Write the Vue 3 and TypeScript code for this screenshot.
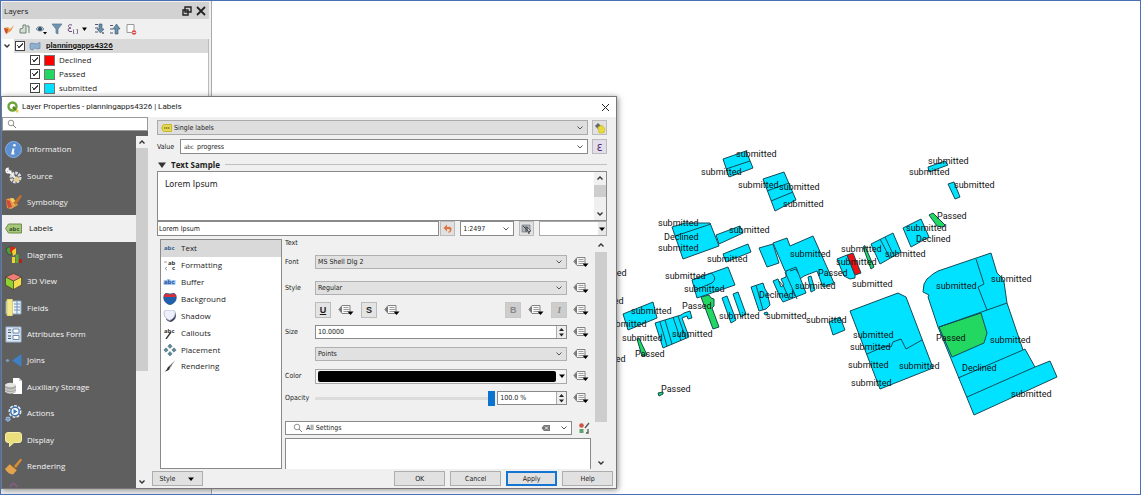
<script setup lang="ts">
import { ref } from 'vue'

type Status = 'Declined' | 'Passed' | 'submitted'
interface Parcel { points: string; kind: Status }
interface MapLabel { x: number; y: number; text: Status }

const legend = ref<{ name: Status; on: boolean }[]>([
  { name: 'Declined', on: true },
  { name: 'Passed', on: true },
  { name: 'submitted', on: true },
])
const layerOn = ref(true)

const pages = [
  { name: 'Information', icon: 'info' },
  { name: 'Source', icon: 'source' },
  { name: 'Symbology', icon: 'symbology' },
  { name: 'Labels', icon: 'labels' },
  { name: 'Diagrams', icon: 'diagrams' },
  { name: '3D View', icon: 'cube' },
  { name: 'Fields', icon: 'fields' },
  { name: 'Attributes Form', icon: 'form' },
  { name: 'Joins', icon: 'joins' },
  { name: 'Auxiliary Storage', icon: 'storage' },
  { name: 'Actions', icon: 'actions' },
  { name: 'Display', icon: 'display' },
  { name: 'Rendering', icon: 'rendering' },
]
const page = ref('Labels')

const sections = [
  { name: 'Text', icon: 'abc' },
  { name: 'Formatting', icon: 'formatting' },
  { name: 'Buffer', icon: 'buffer' },
  { name: 'Background', icon: 'shield' },
  { name: 'Shadow', icon: 'shadow' },
  { name: 'Callouts', icon: 'callouts' },
  { name: 'Placement', icon: 'placement' },
  { name: 'Rendering', icon: 'brush' },
]
const section = ref('Text')

const sample = ref('Lorem Ipsum')
const size = ref('10.0000')
const opacity = ref(100)

const parcels: Parcel[] = [
  { kind: 'submitted', points: '723,159 746,151 753,168 729,177' },
  { kind: 'submitted', points: '763,179 784,172 796,200 775,211' },
  { kind: 'submitted', points: '716,235 740,226 743,233 719,244' },
  { kind: 'submitted', points: '672,227 685,223 710,223 719,246 683,259' },
  { kind: 'submitted', points: '723,254 748,244 751,252 726,262' },
  { kind: 'submitted', points: '692,280 728,267 735,285 697,298' },
  { kind: 'Passed', points: '701,297 709,295 711,298 714,299 714,306 712,308 719,327 713,329' },
  { kind: 'submitted', points: '722,298 727,296 736,320 731,323' },
  { kind: 'submitted', points: '733,294 738,292 746,314 741,317' },
  { kind: 'submitted', points: '751,287 763,283 765,289 767,292 770,305 766,309 759,311' },
  { kind: 'submitted', points: '623,314 653,302 657,318 628,330' },
  { kind: 'submitted', points: '655,323 681,315 684,313 690,311 692,318 688,319 687,316 682,318 689,337 663,348' },
  { kind: 'Passed', points: '637,339 639,338 647,355 642,356' },
  { kind: 'Passed', points: '658,393 663,392 663,394 659,396' },
  { kind: 'submitted', points: '764,313 767,312 768,314 765,315' },
  { kind: 'submitted', points: '759,248 773,244 779,263 767,267' },
  { kind: 'submitted', points: '773,243 787,238 790,246 813,236 834,283 823,287 817,271 804,276 800,279 785,271' },
  { kind: 'submitted', points: '808,277 811,276 815,290 811,292' },
  { kind: 'submitted', points: '773,281 778,279 781,287 784,285 781,279 786,277 786,271 796,267 806,293 783,302 780,297' },
  { kind: 'submitted', points: '837,259 847,255 855,275 855,278 850,279 844,276' },
  { kind: 'Declined', points: '847,255 853,253 861,273 855,275' },
  { kind: 'Passed', points: '863,247 865,246 874,267 871,269' },
  { kind: 'submitted', points: '871,244 893,233 901,252 880,264' },
  { kind: 'submitted', points: '903,228 921,219 929,237 911,247' },
  { kind: 'Passed', points: '929,215 933,213 945,225 943,227 937,226' },
  { kind: 'submitted', points: '928,167 945,161 948,165 929,172' },
  { kind: 'submitted', points: '948,184 954,182 960,197 955,199' },
  { kind: 'submitted', points: '850,311 898,293 906,297 933,368 880,389' },
  { kind: 'submitted', points: '829,322 840,317 845,330 833,335' },
  { kind: 'submitted', points: '923,292 924,284 927,279 933,274 938,271 991,253 997,273 1002,278 1004,282 1007,303 1023,350 1025,349 1035,367 1050,361 1057,377 974,415 938,327 928,297 929,295' },
  { kind: 'Passed', points: '939,327 981,313 987,333 984,343 952,357' },
]

const boundaries = [
  'M726,169 750,161', 'M767,191 789,183', 'M771,201 793,192', 'M675,236 711,224',
  'M692,280 711,273Q718,278 712,283L695,290', 'M756,285 763,310', 'M660,322 667,346',
  'M665,320 672,344', 'M673,317 681,341', 'M678,316 686,339', 'M785,272 797,299',
  'M779,281 784,287 789,299', 'M790,271 796,269 798,273', 'M792,289 795,296',
  'M880,239 890,258', 'M885,237 893,254', 'M867,354 885,346 891,347 893,342 901,339 906,349 922,340',
  'M976,259 984,284 978,287 987,310', 'M939,327 1007,303', 'M958,378 1023,350', 'M967,397 1035,367',
]

const at = (text: Status, spots: number[][]): MapLabel[] => spots.map(([x, y]) => ({ x, y, text }))
const mapLabels: MapLabel[] = [
  ...at('submitted', [
    [736, 157], [701, 175], [738, 188], [779, 190], [783, 207], [729, 233], [707, 262], [658, 226],
    [658, 251], [665, 279], [684, 292], [719, 319], [766, 319], [795, 289], [790, 257], [841, 252],
    [836, 265], [852, 287], [885, 257], [906, 231], [928, 164], [909, 175], [954, 188], [806, 323],
    [853, 338], [850, 350], [848, 368], [899, 369], [851, 386], [936, 289], [991, 282], [990, 343],
    [1011, 397], [631, 314], [606, 327], [622, 341], [672, 337], [586, 276], [583, 304], [585, 362],
  ]),
  ...at('Declined', [[664, 240], [759, 298], [916, 242], [962, 371]]),
  ...at('Passed', [[682, 309], [818, 276], [937, 219], [936, 341], [635, 357], [661, 392]]),
]
</script>

<template>
  <div class="desktop">
    <svg class="defs" aria-hidden="true">
      <symbol id="chev" viewBox="0 0 8 8"><path d="M1.5 2.5 4 5l2.5-2.5" fill="none" stroke="#555" /></symbol>
      <symbol id="up" viewBox="0 0 8 8"><path d="M1.5 5.5 4 3l2.5 2.5" fill="none" stroke="#333" stroke-width="1.4" /></symbol>
      <symbol id="down" viewBox="0 0 8 8"><path d="M1.5 2.5 4 5l2.5-2.5" fill="none" stroke="#333" stroke-width="1.4" /></symbol>
      <symbol id="tri" viewBox="0 0 8 8"><path d="M1 2.500h6L4 6z" fill="#000" /></symbol>
      <symbol id="spin" viewBox="0 0 8 12"><path d="M1.500 5 4 2l2.500 3zM1.500 7.500 4 10.500 6.500 7.500z" fill="#222" /></symbol>
      <symbol id="lens" viewBox="0 0 10 10"><circle cx="4" cy="4" r="2.800" fill="none" stroke="#777" stroke-width=".8" /><path d="m6 6 3 3" stroke="#777" /></symbol>
      <symbol id="define" viewBox="0 0 16 12">
        <path d="M4 1.500h8v8H4L.8 5.500z" fill="#f7f7f7" stroke="#777" stroke-width=".9" />
        <path d="M4 2v7L1 5.500z" fill="#777" />
        <path d="M5.500 3.500h5M5.500 5.500h6M5.500 7.500h5" stroke="#888" stroke-width=".8" />
        <path d="M9.500 7.500h6l-3 3.500z" fill="#000" />
      </symbol>
      <symbol id="info" viewBox="0 0 17 17"><circle cx="8.500" cy="8.500" r="8" fill="#5b8fd0" stroke="#86aee0" /><path d="M8.600 7.500 7.400 12.500h2" fill="none" stroke="#fff" stroke-width="2" /><circle cx="9.400" cy="4.300" r="1.300" fill="#fff" /></symbol>
      <symbol id="source" viewBox="0 0 17 17">
        <circle cx="10.500" cy="10.500" r="4.500" fill="none" stroke="#d8dde4" stroke-width="3" stroke-dasharray="2.400 1" />
        <path d="m2 2 11 12" stroke="#eee" stroke-width="2.200" /><circle cx="3.500" cy="3.500" r="2.300" fill="none" stroke="#fff" stroke-width="1.600" stroke-dasharray="10 4" />
        <path d="m8 13 4-4 3 4-3 2z" fill="#e5cf8a" />
      </symbol>
      <symbol id="symbology" viewBox="0 0 17 17"><path d="M1 5 8 4l5 7-7 4-4-1z" fill="#e2a04a" /><path d="m1 5 4 2 2 6-4 1z" fill="#d64a3b" /><path d="M5 4.500 8 4l4 5-3 2z" fill="#f0cf62" /><path d="m8 9 7-8 2 1-6 9z" fill="#c3702f" /></symbol>
      <symbol id="labels" viewBox="0 0 17 10"><path d="M3.500.5h13v9h-13L.5 5z" fill="#a7c77a" stroke="#6d9146" /><text x="4" y="7" font-size="6" font-weight="bold" fill="#33512a">abc</text></symbol>
      <symbol id="diagrams" viewBox="0 0 17 17"><path d="M1 3Q5-1 10 2L6 9Q2 9 1 3z" fill="#49a23c" stroke="#222" stroke-width=".5" /><path d="M5 1q4-1 6 1L8 8 5 6z" fill="#d52b1e" /><path d="M7 5 11 2v6l-3 2z" fill="#f2d22e" /><path d="M7 11h3v6H7z" fill="#f2d22e" /><path d="M10.500 8.500h3V17h-3z" fill="#57ad3b" /><path d="M14 13h3v4h-3z" fill="#b81f1f" /></symbol>
      <symbol id="cube" viewBox="0 0 17 17"><path d="M8.500.5 16.500 4 8.500 8 .5 4z" fill="#ee7b78" /><path d="M.5 4 8.500 8v8.500L.5 12z" fill="#8fd133" /><path d="M16.500 4 8.500 8v8.500l8-4.500z" fill="#f2dd51" /><path d="M.5 4 8.500 8l8-4M8.500 8v8.500M.5 4v8l8 4.500 8-4.500V4l-8-3.500z" fill="none" stroke="#453b24" stroke-width=".7" /></symbol>
      <symbol id="fields" viewBox="0 0 17 17"><path d="M1 2h15v13H1z" fill="#eef2f6" stroke="#86a5c4" /><path d="M9 5h6M9 8h6M9 11h6M12 2v13" stroke="#6f95bf" /><path d="M2 0h5.500v17H2z" fill="#f3e98b" stroke="#c9b94f" stroke-width=".6" /></symbol>
      <symbol id="form" viewBox="0 0 17 17"><path d="M1 1h15v15H1z" fill="#dbe6f2" stroke="#9db6d0" /><path d="M8 3h6v4H8zM8 9.500h6v4H8z" fill="#fff" stroke="#6f8bab" /><path d="M3 4h3M3 6.500h3M3 10h3M3 12.500h3" stroke="#44597a" /></symbol>
      <symbol id="joins" viewBox="0 0 17 17"><path d="M16.500 2v13L7 8.500z" fill="#3f7fc4" /><circle cx="2.500" cy="8.500" r="1.600" fill="#7f9cb8" /></symbol>
      <symbol id="storage" viewBox="0 0 17 17"><path d="M8 0h6l3 3v13H8z" fill="#fff" /><path d="M14 0v3h3" fill="#ccc" /><path d="M0 7v7q5 4 11 0V7z" fill="#a8a8a4" /><ellipse cx="5.500" cy="7" rx="5.500" ry="2.200" fill="#e4e4e0" /><path d="M0 10.500q5 3.500 11 0M0 13q5 3.500 11 0" fill="none" stroke="#eee" stroke-width=".7" /></symbol>
      <symbol id="actions" viewBox="0 0 17 17"><circle cx="10" cy="6.500" r="5" fill="#fff" stroke="#dfe8f2" stroke-width="3" stroke-dasharray="2.500 1.200" /><circle cx="10" cy="6.500" r="4.200" fill="#fff" stroke="#3c72ad" stroke-width="1.500" /><path d="m8.500 4 4 2.500-4 2.500z" fill="#3c72ad" /><circle cx="3" cy="14" r="2" fill="#6f9acb" stroke="#a9c4e2" stroke-width="1.300" stroke-dasharray="1.500 .7" /></symbol>
      <symbol id="display" viewBox="0 0 17 17"><path d="M3 1.500h11q2.500 0 2.500 2.500v5q0 2.500-2.500 2.500H9L4.500 15.500V11.500H3Q.5 11.500.5 9V4Q.5 1.500 3 1.500z" fill="#eadf7c" stroke="#f4edaa" /></symbol>
      <symbol id="rendering" viewBox="0 0 17 17"><path d="m9 8 6.500-7.500L17 2l-6 8z" fill="#d88d33" /><path d="m5 6 7 6-4 4.500Q3 16 0 11z" fill="#e3a34e" /><path d="m5 6 7 6" stroke="#8b5a20" /></symbol>
      <symbol id="abc" viewBox="0 0 14 12"><text x="1" y="8" font-size="6" font-weight="bold" fill="#2f608c">abc</text></symbol>
      <symbol id="formatting" viewBox="0 0 14 12"><text x="5" y="6" font-size="6" font-weight="bold" fill="#333">ab</text><text x="9" y="11" font-size="6" font-weight="bold" fill="#333">c</text><path d="M1 3h3M4 8 2 9.500 4 11" fill="none" stroke="#888" stroke-width=".8" /></symbol>
      <symbol id="buffer" viewBox="0 0 14 12"><text x="1" y="8" font-size="6" font-weight="bold" fill="#24539c" stroke="#9cc0ee" stroke-width="2" paint-order="stroke">abc</text></symbol>
      <symbol id="shield" viewBox="0 0 14 12"><path d="M1 2 3 0l4 1 4-1 2 2q2 7-6 10Q-1 9 1 2z" fill="#1f61ad" stroke="#274a78" stroke-width=".5" /><path d="M1 2.500 3 .5l4 1 4-1 2 2V4H1z" fill="#d8303a" /></symbol>
      <symbol id="shadow" viewBox="0 0 14 12"><path d="M3 2 12 2q3 7-4 10-5-1-5-4z" fill="#3a3f55" /><path d="M1 1.500 3 0h7l2 1.500Q13 8 6.500 10.500.5 8 1 1.500z" fill="#eef0fb" stroke="#a6acc8" stroke-width=".7" /></symbol>
      <symbol id="callouts" viewBox="0 0 14 12"><text x="1" y="6" font-size="6" font-weight="bold" fill="#333">abc</text><path d="m8 5-5 7" stroke="#333" stroke-width="1.300" /></symbol>
      <symbol id="placement" viewBox="0 0 14 12"><path d="m7 0 2.200 2.200L7 4.400 4.800 2.200zM7 7.600l2.200 2.200L7 12 4.800 9.800zM3 3.800 5.200 6 3 8.200.8 6zM11 3.800 13.200 6 11 8.200 8.800 6z" fill="#5f8a96" stroke="#3d6470" stroke-width=".5" /></symbol>
      <symbol id="brush" viewBox="0 0 14 12"><path d="M12.500 0Q9 4 8 7L6 8 5.500 6.500Z" fill="#777" /><path d="M7 6.500Q7 11 1.500 11.500 4 10 5 7z" fill="#333" /></symbol>
    </svg>

    <aside class="layers">
      <header class="layers-title">
        <span>Layers</span>
        <button class="flat" aria-label="Float panel">
          <svg width="10" height="10" viewBox="0 0 10 10"><path d="M3 1h6v5H3zM1 4h5v5H1z" fill="#d0d0d0" stroke="#222" stroke-width="1.400" /></svg>
        </button>
        <button class="flat" aria-label="Close panel">
          <svg width="10" height="10" viewBox="0 0 10 10"><path d="m1 1 8 8m0-8L1 9" stroke="#222" stroke-width="1.800" /></svg>
        </button>
      </header>
      <div class="tools">
        <button class="flat" aria-label="Style panel"><svg width="12" height="12" viewBox="0 0 12 12"><path d="m1 5 4-1 2 2 4-4-3 6-5 3z" fill="#e6a04a" /><path d="m1 5 4 1-1 5-2-2z" fill="#cf4a32" /></svg></button>
        <button class="flat" aria-label="Add group"><svg width="12" height="12" viewBox="0 0 12 12"><path d="M1 10V6l3-1V2h3v8zM8 3h2v7" fill="#d5dcd4" stroke="#6f8577" /></svg></button>
        <button class="flat" aria-label="Map themes"><svg width="12" height="12" viewBox="0 0 12 12"><path d="M1 6q4-5 8 0-4 4-8 0z" fill="#bccbd8" stroke="#7d8f9e" /><circle cx="5" cy="6" r="2" fill="#31536f" /><path d="M8 9h4l-2 2.500z" /></svg></button>
        <button class="flat" aria-label="Filter legend"><svg width="12" height="12" viewBox="0 0 12 12"><path d="M1 1h10L7 6v5l-2-1V6z" fill="#6f94b3" stroke="#58788f" stroke-width=".7" /></svg></button>
        <button class="flat wide" aria-label="Filter by expression"><svg width="22" height="12" viewBox="0 0 22 12"><path d="M5 2Q1 1 1.500 3.500 2 5 4 5 1 5 1 7t4 1.500" fill="none" stroke="#6b4a7a" /><path d="M6.500 6.500v4h1m2-4h1v4h-1" fill="none" stroke="#6b4a7a" stroke-width=".8" /><path d="M15 4.500h5L17.500 8z" /></svg></button>
        <button class="flat" aria-label="Expand all"><svg width="12" height="12" viewBox="0 0 12 12"><path d="M2 1.500h3M2 5h3M2 9h3" stroke="#557" /><path d="M6 1h3v5h2l-3.500 4L4 6h2z" fill="#6b91a8" stroke="#38586b" stroke-width=".6" /><path d="M9 9h2v2H9z" fill="#888" /></svg></button>
        <button class="flat" aria-label="Collapse all"><svg width="12" height="12" viewBox="0 0 12 12"><path d="M1 2.500h3M1 6h3M1 10h3" stroke="#557" /><path d="M6 11h3V6h2L7.500 1 4 6h2z" fill="#6b91a8" stroke="#38586b" stroke-width=".6" /></svg></button>
        <button class="flat" aria-label="Remove layer"><svg width="12" height="12" viewBox="0 0 12 12"><path d="M2 1.500h7v8H2z" fill="#fafafa" stroke="#999" /><circle cx="9" cy="9.500" r="2.300" fill="#dd4c4c" /><path d="M7.500 9.500h3" stroke="#fff" stroke-width=".8" /></svg></button>
      </div>
      <div class="tree">
        <div class="layer">
          <svg width="8" height="8"><use href="#down" /></svg>
          <input id="layer" v-model="layerOn" type="checkbox" />
          <svg width="12" height="9" viewBox="0 0 12 9"><path d="M1 1.500q2-1 4 0t6-1v6q-3 1-5-.5-2 0-2 2-3 0-3-2z" fill="#8fb0cf" stroke="#6587a8" stroke-width=".7" /></svg>
          <label for="layer">planningapps4326</label>
        </div>
        <div v-for="item in legend" :key="item.name" class="class-row">
          <input :id="item.name" v-model="item.on" type="checkbox" />
          <span class="swatch" :class="item.name.toLowerCase()"></span>
          <label :for="item.name">{{ item.name }}</label>
        </div>
      </div>
    </aside>

    <main class="map">
      <svg viewBox="212 1 928 493" preserveAspectRatio="xMinYMin meet" role="img" aria-label="Planning applications map">
        <polygon v-for="(p, i) in parcels" :key="i" :points="p.points" :class="['parcel', p.kind.toLowerCase()]" />
        <path v-for="(d, i) in boundaries" :key="'b' + i" :d="d" class="boundary" />
        <text v-for="(l, i) in mapLabels" :key="'t' + i" :x="l.x" :y="l.y">{{ l.text }}</text>
      </svg>
    </main>

    <section class="dialog" role="dialog" aria-label="Layer Properties">
      <header class="dialog-title">
        <svg width="12" height="12" viewBox="0 0 12 12"><circle cx="5.500" cy="5.500" r="4" fill="none" stroke="#6ca33b" stroke-width="2.400" /><path d="m6 6 5 5" stroke="#e9d24a" stroke-width="2.500" /><path d="m6 6 3 3" stroke="#4d8a2c" stroke-width="2.500" /></svg>
        <h1>Layer Properties - planningapps4326 | Labels</h1>
        <button class="flat" aria-label="Close"><svg width="9" height="9" viewBox="0 0 9 9"><path d="m1 1 7 7m0-7L1 8" stroke="#222" /></svg></button>
      </header>

      <div class="dialog-body">
        <nav class="side">
          <div class="search">
            <svg width="10" height="10"><use href="#lens" /></svg>
            <input type="text" aria-label="Search options" />
          </div>
          <div class="side-main">
            <div class="pages">
              <button v-for="p in pages" :key="p.name" :class="['page', { active: p.name === page }]" @click="page = p.name">
                <svg width="17" height="17"><use :href="'#' + p.icon" /></svg><span>{{ p.name }}</span>
              </button>
              <button class="page more" aria-label="Variables"><svg width="17" height="8" viewBox="0 0 17 8"><path d="M5 7q3-7 7 0" fill="none" stroke="#8a5c8a" stroke-width="1.500" /></svg></button>
            </div>
            <div class="bar">
              <svg width="8" height="8"><use href="#up" /></svg>
              <span class="thumb"></span>
              <svg width="8" height="8"><use href="#down" /></svg>
            </div>
          </div>
        </nav>

        <div class="content">
          <div class="line">
            <div class="combo grey">
              <svg class="lead" width="11" height="8" viewBox="0 0 11 8"><path d="M2.500.5h8v7h-8L.5 4z" fill="#e6d94c" stroke="#c4b63a" /><path d="M3 4h6" stroke="#84782a" stroke-width="1.500" stroke-dasharray="1.500 .5" /></svg>
              <select aria-label="Label mode" class="pad-icon"><option>Single labels</option></select>
              <svg class="arrow" width="8" height="8"><use href="#chev" /></svg>
            </div>
            <button class="tool" aria-label="Placement engine settings"><svg width="12" height="12" viewBox="0 0 12 12"><path d="m1 4 3-3 3 3-3 3z" fill="#666" /><path d="m4 5 4-2 3 4-1 4H5z" fill="#e8d93b" stroke="#c7b52f" stroke-width=".6" /></svg></button>
          </div>
          <div class="line">
            <label class="value" for="value">Value</label>
            <div class="combo">
              <svg class="lead" width="12" height="8" viewBox="0 0 12 8"><text x="0" y="6" font-size="6" fill="#333">abc</text></svg>
              <select id="value" class="pad-icon"><option>progress</option></select>
              <svg class="arrow" width="8" height="8"><use href="#chev" /></svg>
            </div>
            <button class="tool violet" aria-label="Expression">ε</button>
          </div>
          <h2><svg width="8" height="8" viewBox="0 0 8 8"><path d="M0 1.500h8L4 7z" fill="#333" /></svg><span>Text Sample</span></h2>
          <div class="preview">
            <p>{{ sample }}</p>
            <div class="bar">
              <svg width="8" height="8"><use href="#up" /></svg>
              <span class="thumb"></span>
              <svg width="8" height="8"><use href="#down" /></svg>
            </div>
          </div>
          <div class="sample-row">
            <input v-model="sample" type="text" class="sample" aria-label="Sample text" />
            <button class="tool" aria-label="Reset sample"><svg width="10" height="10" viewBox="0 0 10 10"><path d="M4 .5v7L.5 4zM4 3q5-1 4.500 3Q8 8.500 5.500 9V7.500Q7 7 7 6T4 5z" fill="#de7440" /></svg></button>
            <div class="combo scale">
              <select aria-label="Scale"><option>1:2497</option></select>
              <svg class="arrow" width="8" height="8"><use href="#chev" /></svg>
            </div>
            <button class="tool" aria-label="Use map scale"><svg width="11" height="10" viewBox="0 0 11 10"><path d="M1 1h8v7H1z" fill="#aab4bb" stroke="#778" stroke-width=".7" /><path d="m2 2 5 5M5 2v6" stroke="#444" /><path d="m6 3 4 4H8v3z" fill="#fff" stroke="#333" stroke-width=".7" /></svg></button>
            <button class="preview-color" aria-label="Preview background"><span></span><svg width="8" height="8"><use href="#tri" /></svg></button>
          </div>

          <div class="panel">
            <div class="sections">
              <button v-for="s in sections" :key="s.name" :class="{ active: s.name === section }" @click="section = s.name">
                <svg width="14" height="12"><use :href="'#' + s.icon" /></svg><span>{{ s.name }}</span>
              </button>
            </div>
            <div class="settings">
              <p class="heading">Text</p>
              <div class="row first">
                <label for="font">Font</label>
                <div class="combo light"><select id="font"><option>MS Shell Dlg 2</option></select><svg class="arrow" width="8" height="8"><use href="#chev" /></svg></div>
                <button class="flat" aria-label="Override font"><svg width="16" height="12"><use href="#define" /></svg></button>
              </div>
              <div class="row">
                <label for="style">Style</label>
                <div class="combo light"><select id="style"><option>Regular</option></select><svg class="arrow" width="8" height="8"><use href="#chev" /></svg></div>
                <button class="flat" aria-label="Override style"><svg width="16" height="12"><use href="#define" /></svg></button>
              </div>
              <div class="row">
                <span></span>
                <div class="marks">
                  <button class="mark under">U</button>
                  <button class="flat" aria-label="Override underline"><svg width="16" height="12"><use href="#define" /></svg></button>
                  <button class="mark">S</button>
                  <button class="flat" aria-label="Override strikeout"><svg width="16" height="12"><use href="#define" /></svg></button>
                  <button class="mark off push" disabled>B</button>
                  <button class="flat" aria-label="Override bold"><svg width="16" height="12"><use href="#define" /></svg></button>
                  <button class="mark off italic" disabled>I</button>
                </div>
                <button class="flat" aria-label="Override italic"><svg width="16" height="12"><use href="#define" /></svg></button>
              </div>
              <div class="row">
                <label for="size">Size</label>
                <div class="spin"><input id="size" v-model="size" type="text" /><svg width="8" height="12"><use href="#spin" /></svg></div>
                <button class="flat" aria-label="Override size"><svg width="16" height="12"><use href="#define" /></svg></button>
              </div>
              <div class="row">
                <span></span>
                <div class="combo light"><select aria-label="Size unit"><option>Points</option></select><svg class="arrow" width="8" height="8"><use href="#chev" /></svg></div>
                <button class="flat" aria-label="Override unit"><svg width="16" height="12"><use href="#define" /></svg></button>
              </div>
              <div class="row">
                <label for="color">Color</label>
                <button id="color" class="color"><span></span><svg width="8" height="8"><use href="#tri" /></svg></button>
                <button class="flat" aria-label="Override color"><svg width="16" height="12"><use href="#define" /></svg></button>
              </div>
              <div class="row">
                <label for="opacity">Opacity</label>
                <div class="opacity">
                  <input id="opacity" v-model.number="opacity" type="range" min="0" max="100" />
                  <div class="spin"><input type="text" aria-label="Opacity value" :value="opacity.toFixed(1) + ' %'" /><svg width="8" height="12"><use href="#spin" /></svg></div>
                </div>
                <button class="flat" aria-label="Override opacity"><svg width="16" height="12"><use href="#define" /></svg></button>
              </div>
              <div class="filter">
                <div class="combo">
                  <svg class="lead" width="10" height="10"><use href="#lens" /></svg>
                  <input type="text" value="All Settings" aria-label="Filter settings" />
                  <svg class="clear" width="10" height="8" viewBox="0 0 10 8"><path d="M3 1h6v6H3L.5 4z" fill="#777" /><path d="m4 2.500 3 3m0-3-3 3" stroke="#fff" stroke-width=".9" /></svg>
                  <svg class="arrow" width="8" height="8"><use href="#chev" /></svg>
                </div>
                <button class="flat" aria-label="Style manager"><svg width="12" height="12" viewBox="0 0 12 12"><circle cx="3.500" cy="3.500" r="2.300" fill="#d0543f" /><path d="M1.500 7h4v4h-4z" fill="#5fa36b" /><path d="m11 1-4 5M10 7v4H8" stroke="#555" stroke-width="1.300" fill="none" /></svg></button>
              </div>
              <div class="styles"></div>
            </div>
            <div class="bar">
              <svg width="8" height="8"><use href="#up" /></svg>
              <span class="thumb"></span>
              <svg width="8" height="8"><use href="#down" /></svg>
            </div>
          </div>

          <footer>
            <button class="push-button style-button">Style<svg width="8" height="8"><use href="#tri" /></svg></button>
            <button class="push-button">OK</button>
            <button class="push-button">Cancel</button>
            <button class="push-button default">Apply</button>
            <button class="push-button">Help</button>
          </footer>
        </div>
      </div>
    </section>
  </div>
</template>

<style>
body { background: #fff; }
</style>

<style scoped>
* { box-sizing: border-box; }
.desktop {
  position: relative;
  display: flex;
  min-height: 100vh;
  border: 1px solid #4a6fb5;
  background: #fff;
  color: #1c1c1c;
  font: 8px/12px "Open Sans", "Noto Sans", sans-serif;
  overflow: hidden;
}
.defs { position: absolute; width: 0; height: 0; }
svg { display: block; flex: none; }
h1, h2, p { margin: 0; font: inherit; }
button, input, select { font: inherit; color: inherit; margin: 0; padding: 0; min-width: 0; }
.flat { display: flex; align-items: center; justify-content: center; border: 0; background: none; }

.layers { flex: none; width: 211px; display: flex; flex-direction: column; padding: 1px 2px 5px 1px; background: #f0f0f0; border-right: 1px solid #aaa; }
.layers-title { display: flex; align-items: center; gap: 4px; height: 17px; padding: 0 3px 0 2px; background: #d2d2d2; }
.layers-title span { flex: 1; }
.tools { display: flex; align-items: center; gap: 4px; height: 20px; padding-left: 1px; }
.tree { flex: 1; background: #fff; border-right: 1px solid #bbb; }
.layer { display: flex; align-items: center; gap: 4px; height: 14px; padding-left: 1px; background: linear-gradient(90deg, #fff 12px, #d9d9d9 12px); }
.layer label { padding-left: 1px; font: 700 8px/12px Roboto, "Open Sans", sans-serif; text-decoration: underline; }
.class-row { display: flex; align-items: center; gap: 4px; height: 14px; padding-left: 28px; }
input[type="checkbox"] { appearance: none; flex: none; width: 10px; height: 10px; border: 1px solid #444; background: #fff; }
input[type="checkbox"]:checked { background: linear-gradient(135deg, transparent 50%, #444 50%, #444 64%, transparent 64%) no-repeat 2px 0 / 5px 6px, linear-gradient(45deg, transparent 40%, #444 40%, #444 60%, transparent 60%) no-repeat 1px 3px / 3px 3px, #fff; }
.swatch { width: 11px; height: 11px; border: 1px solid #777; }
.swatch.declined { background: #f00; }
.swatch.passed { background: #22d860; }
.swatch.submitted { background: #00e2ff; }

.map { flex: 1; min-width: 0; }
.map svg { width: 100%; height: auto; }
.map text { font: 9px Roboto, "Open Sans", sans-serif; fill: #111; }
.parcel { stroke: #134c58; stroke-width: 1; }
.parcel.submitted { fill: #00e2ff; }
.parcel.passed { fill: #22d860; }
.parcel.declined { fill: #f01010; }
.boundary { fill: none; stroke: #134c58; stroke-width: 1; }

.dialog { position: absolute; left: 0; top: 95px; bottom: 5px; width: 54.100%; display: flex; flex-direction: column; border: 1px solid #777; background: #f0f0f0; box-shadow: 1px 1px 6px rgb(0 0 0 / 45%); }
.dialog-title { display: flex; align-items: center; gap: 3px; height: 20px; padding: 0 6px 0 5px; background: #fff; }
.dialog-title h1 { flex: 1; font: 8px/12px Roboto, "Open Sans", sans-serif; }
.dialog-body { flex: 1; display: flex; min-height: 0; }
.side { flex: none; width: 146px; display: flex; flex-direction: column; background: #5f5f5f; }
.search { display: flex; align-items: center; gap: 4px; height: 14px; padding-left: 4px; background: #fff; border: 1px solid #999; }
.search input { flex: 1; height: 12px; border: 0; outline: 0; background: none; }
.side-main { flex: 1; display: flex; min-height: 0; padding-top: 5px; }
.pages { flex: 1; display: flex; flex-direction: column; }
.page { flex: 3 1 0; display: flex; align-items: center; gap: 5px; min-height: 0; padding-left: 3px; border: 0; background: none; color: #f4f4f4; text-align: left; }
.page.active { background: #f0f0f0; color: #111; gap: 7px; }
.page.more { flex: 1 1 0; }
.bar { flex: none; width: 12px; display: flex; flex-direction: column; align-items: center; justify-content: space-between; padding: 2px 0; background: #f0f0f0; }
.thumb { width: 100%; background: #cdcdcd; }
.bar .thumb { margin-bottom: auto; }
.side .thumb { height: 64%; margin-top: 2px; }

.content { flex: 1; min-width: 0; display: flex; flex-direction: column; padding: 3px 3px 2px 4px; font: 7px/12px "DejaVu Sans Condensed", "Open Sans", sans-serif; }
.line { display: flex; gap: 4px; height: 15px; margin: 0 6px 4px 5px; align-items: center; }
.value { width: 19px; }
.combo { flex: 1; min-width: 0; display: grid; grid-template-columns: 1fr 14px; align-items: center; height: 15px; border: 1px solid #8a8a8a; background: #fff; }
.combo.grey { background: #dedede; border-color: #aaa; }
.combo.light { background: #e1e1e1; border-color: #b0b0b0; }
.combo select, .combo > input { appearance: none; grid-area: 1 / 1 / 2 / 3; width: 100%; height: 13px; border: 0; outline: 0; background: none; padding-left: 2px; }
.lead { grid-area: 1 / 1; margin-left: 3px; }
.arrow { grid-area: 1 / 2; margin-left: 3px; pointer-events: none; }
.combo .pad-icon { padding-left: 16px; }
.tool { flex: none; display: flex; align-items: center; justify-content: center; width: 15px; height: 15px; border: 1px solid #bbb; background: #e1e1e1; }
.violet { background: #e4deec; color: #4d2f66; font-size: 12px; line-height: 10px; }
h2 { display: flex; align-items: center; gap: 5px; height: 13px; margin: 0 6px; font: 700 8px/12px "Open Sans", sans-serif; }
h2::after { content: ""; flex: 1; height: 1px; background: #c0c0c0; }
.preview { display: flex; height: 50px; margin: 0 6px 0 5px; border: 1px solid #8a8a8a; background: #fff; }
.preview p { flex: 1; padding: 6px 7px; font: 9px/13px "DejaVu Sans Condensed", sans-serif; }
.preview .thumb { height: 12px; margin-top: 3px; }
.sample-row { display: flex; gap: 5px; height: 15px; margin: 0 6px 3px 5px; }
.sample { flex: 1; height: 15px; border: 1px solid #8a8a8a; padding: 0 1px; background: #fff; margin-right: -4px; }
.combo.scale { flex: none; width: 54px; }
.preview-color { display: flex; align-items: center; width: 68px; border: 1px solid #aaa; background: #e8e8e8; }
.preview-color span { flex: 1; height: 100%; background: #fff; }

.panel { flex: 1; min-height: 0; display: flex; margin: 0 6px 0 8px; }
.sections { flex: none; width: 122px; display: flex; flex-direction: column; border: 1px solid #8a8a8a; background: #fff; font: 8px/12px "Open Sans", sans-serif; }
.sections button { flex: 0 0 7.400%; display: flex; align-items: center; gap: 4px; min-height: 0; padding-left: 2px; border: 0; background: none; text-align: left; }
.sections button.active { background: #d9d9d9; }
.settings { flex: 1; min-width: 0; display: flex; flex-direction: column; padding: 0 4px 0 3px; overflow: hidden; }
.heading { height: 12px; line-height: 9px; }
.row { display: grid; grid-template-columns: 30px 1fr 24px; align-items: center; height: 22px; }
.row.first { margin-bottom: 4px; }
.row > .flat { justify-content: flex-end; padding-right: 2px; }
.row .combo { height: 14px; }
.row .combo select { height: 12px; }
.marks { display: flex; align-items: center; gap: 7px; }
.mark { width: 16px; height: 16px; border: 1px solid #bbb; background: #e4e4e4; font: 700 9px/12px "Liberation Sans", sans-serif; }
.under { text-decoration: underline; }
.push { margin-left: auto; }
.off { background: #cdcdcd; border-color: #c8c8c8; color: #888; }
.italic { font-family: "Liberation Serif", serif; font-style: italic; }
.spin { display: flex; align-items: center; height: 14px; border: 1px solid #8a8a8a; background: #fff; }
.spin input { flex: 1; width: 100%; height: 12px; padding-left: 2px; border: 0; outline: 0; background: none; }
.spin svg { width: 10px; height: 12px; border-left: 1px solid #aaa; background: #eee; }
.color { display: flex; align-items: center; gap: 2px; height: 15px; border: 1px solid #aaa; background: #f4f4f4; padding-left: 2px; }
.color span { flex: 1; height: 11px; border-radius: 2px; background: #000; }
.opacity { display: flex; align-items: center; gap: 2px; }
.opacity .spin { width: 70px; }
input[type="range"] { appearance: none; flex: 1; height: 15px; background: none; }
input[type="range"]::-webkit-slider-runnable-track { height: 3px; background: #dcdcdc; }
input[type="range"]::-webkit-slider-thumb { appearance: none; width: 7px; height: 15px; margin-top: -6px; background: #0b74d1; }
.filter { display: flex; align-items: center; gap: 6px; margin-top: 12px; padding-right: 1px; }
.filter .combo { height: 14px; grid-template-columns: 1fr 16px 14px; }
.filter .combo > input { height: 12px; padding-left: 20px; }
.filter .lead { margin-left: 7px; }
.clear { grid-area: 1 / 2; }
.filter .arrow { grid-area: 1 / 3; }
.styles { flex: 1; margin-top: 3px; border: 1px solid #8a8a8a; border-bottom: 0; background: #fff; }
.panel .bar .thumb { height: 75%; margin-top: 3px; }

footer { display: flex; gap: 5px; height: 17px; align-items: end; }
.push-button { flex: none; width: 51px; height: 15px; border: 1px solid #adadad; background: #e1e1e1; }
.style-button { display: flex; align-items: center; justify-content: center; gap: 12px; margin-right: auto; }
.default { border: 2px solid #1476d2; line-height: 10px; }
</style>
